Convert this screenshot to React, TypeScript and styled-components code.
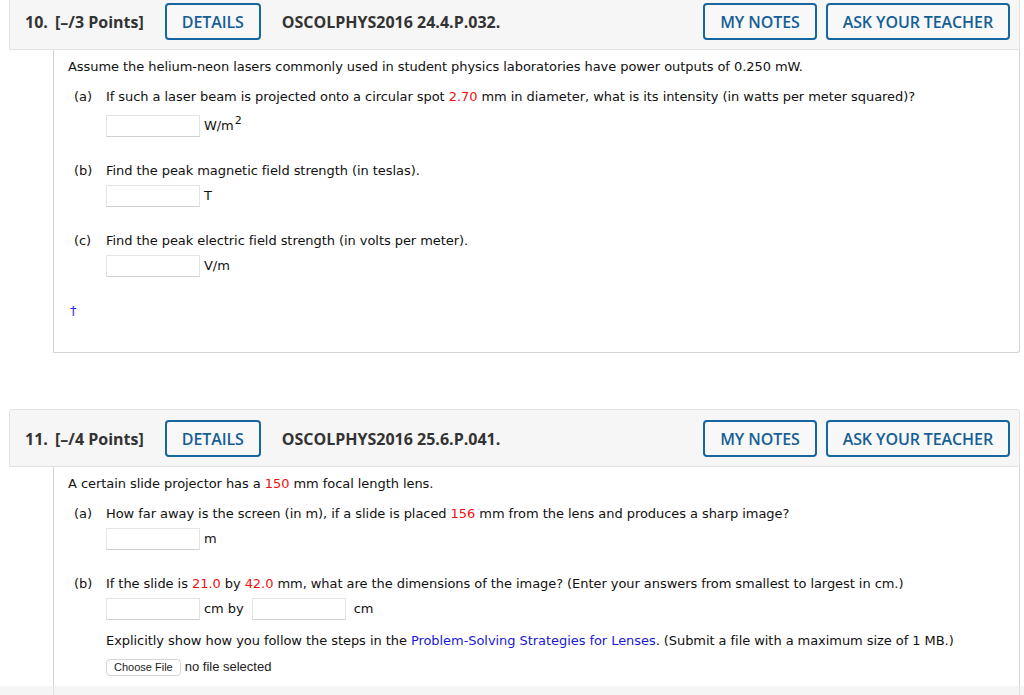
import React from 'react';
import styled, { createGlobalStyle } from 'styled-components';

const GlobalStyle = createGlobalStyle`
  html, body {
    margin: 0;
    padding: 0;
    background: #ffffff;
  }
  body {
    font-family: "DejaVu Sans", Verdana, sans-serif;
    overflow: hidden;
  }
`;

type Part = {
  label: string;
  question: React.ReactNode;
  answer: React.ReactNode;
  extra?: React.ReactNode;
  raised?: boolean;
};

type Question = {
  num: string;
  points: string;
  code: string;
  intro: React.ReactNode;
  parts: Part[];
  footnote?: boolean;
  gap?: boolean;
};

const getQuestions = (): Question[] => [
  {
    num: '10.',
    points: '[–/3 Points]',
    code: 'OSCOLPHYS2016 24.4.P.032.',
    intro: (
      <>Assume the helium-neon lasers commonly used in student physics laboratories have power outputs of 0.250 mW.</>
    ),
    parts: [
      {
        label: '(a)',
        question: (
          <>
            If such a laser beam is projected onto a circular spot <Given>2.70</Given> mm in diameter, what is its
            intensity (in watts per meter squared)?
          </>
        ),
        answer: (
          <>
            W/m<sup>2</sup>
          </>
        ),
        raised: true,
      },
      {
        label: '(b)',
        question: <>Find the peak magnetic field strength (in teslas).</>,
        answer: <>T</>,
      },
      {
        label: '(c)',
        question: <>Find the peak electric field strength (in volts per meter).</>,
        answer: <>V/m</>,
      },
    ],
    footnote: true,
  },
  {
    num: '11.',
    points: '[–/4 Points]',
    code: 'OSCOLPHYS2016 25.6.P.041.',
    intro: (
      <>
        A certain slide projector has a <Given>150</Given> mm focal length lens.
      </>
    ),
    parts: [
      {
        label: '(a)',
        question: (
          <>
            How far away is the screen (in m), if a slide is placed <Given>156</Given> mm from the lens and produces a
            sharp image?
          </>
        ),
        answer: <>m</>,
      },
      {
        label: '(b)',
        question: (
          <>
            If the slide is <Given>21.0</Given> by <Given>42.0</Given> mm, what are the dimensions of the image? (Enter
            your answers from smallest to largest in cm.)
          </>
        ),
        answer: (
          <>
            cm by <AnswerBox /> cm
          </>
        ),
        extra: (
          <>
            <Note>
              Explicitly show how you follow the steps in the <Link>Problem-Solving Strategies for Lenses</Link>.
              (Submit a file with a maximum size of 1 MB.)
            </Note>
            <FileRow>
              <FileButton>Choose File</FileButton>
              <FileName>no file selected</FileName>
            </FileRow>
          </>
        ),
      },
    ],
    gap: true,
  },
];

const App = () => {
  const questions = getQuestions();
  return (
    <>
      <GlobalStyle />
      <Page>
        {questions.map((q) => (
          <Card key={q.num} $gap={!!q.gap}>
            <Header>
              <Num>{q.num}</Num>
              <Points>{q.points}</Points>
              <OutlineButton>DETAILS</OutlineButton>
              <Code>{q.code}</Code>
              <HeaderActions>
                <OutlineButton>MY NOTES</OutlineButton>
                <OutlineButton>ASK YOUR TEACHER</OutlineButton>
              </HeaderActions>
            </Header>
            <Body $open={!q.footnote}>
              <Intro>{q.intro}</Intro>
              {q.parts.map((p) => (
                <PartBlock key={p.label}>
                  <PartLabel>{p.label}</PartLabel>
                  <PartMain>
                    <PartText>{p.question}</PartText>
                    <AnswerRow $raised={!!p.raised}>
                      <AnswerBox />
                      <Unit>{p.answer}</Unit>
                    </AnswerRow>
                    {p.extra}
                  </PartMain>
                </PartBlock>
              ))}
              {q.footnote && <Dagger>†</Dagger>}
            </Body>
          </Card>
        ))}
      </Page>
      <BottomShade />
    </>
  );
};

export default App;

const Page = styled.div`
  margin-top: -8px;
  padding: 0 4px 0 9px;
`;

const Card = styled.section<{ $gap: boolean }>`
  margin-top: ${(p) => (p.$gap ? '56px' : '0')};
`;

const Header = styled.div`
  display: flex;
  align-items: center;
  height: 58px;
  box-sizing: border-box;
  padding: 1px 9px 0 15px;
  background: #f6f6f6;
  border: 1px solid #e2e2e2;
  border-radius: 3px 3px 0 0;
  font-family: "Open Sans", "DejaVu Sans", sans-serif;
`;

const Num = styled.span`
  font-size: 16px;
  font-weight: 700;
  color: #333333;
  width: 30px;
`;

const Points = styled.span`
  font-size: 16px;
  font-weight: 700;
  color: #333333;
  margin-right: 21px;
`;

const Code = styled.span`
  font-size: 16px;
  font-weight: 700;
  color: #333333;
  margin-left: 21px;
`;

const HeaderActions = styled.div`
  display: flex;
  gap: 9px;
  margin-left: auto;
`;

const OutlineButton = styled.button`
  height: 37px;
  box-sizing: border-box;
  padding: 0 15px;
  border: 2px solid #16669f;
  border-radius: 4px;
  background: #f8f8f8;
  color: #155f97;
  font-family: "Open Sans", "DejaVu Sans", sans-serif;
  font-size: 16px;
  font-weight: 600;
  letter-spacing: -0.1px;
  cursor: pointer;
`;

const Body = styled.div<{ $open: boolean }>`
  margin-left: 44px;
  border: 1px solid #d4d4d4;
  border-top: none;
  border-radius: 0 0 3px 0;
  padding: 8px 14px ${(p) => (p.$open ? '40px' : '32px')};
  font-size: 13px;
  line-height: 18px;
  letter-spacing: -0.06px;
  color: #111111;
`;

const Intro = styled.div`
  margin-bottom: 12px;
`;

const PartBlock = styled.div`
  display: flex;
  padding-left: 6px;
  margin-bottom: 25px;
`;

const PartLabel = styled.div`
  width: 32px;
  flex-shrink: 0;
`;

const PartMain = styled.div`
  flex: 1;
`;

const PartText = styled.div``;

const AnswerRow = styled.div<{ $raised: boolean }>`
  display: flex;
  align-items: center;
  margin-top: ${(p) => (p.$raised ? '9px' : '5px')};
  height: 22px;
`;

const AnswerBox = styled.span`
  display: inline-block;
  width: 94px;
  height: 22px;
  box-sizing: border-box;
  border: 1px solid #e4e4e4;
  border-bottom-color: #d0d0d0;
  background: #ffffff;
  vertical-align: middle;
  margin: 0 4px 0 0;
`;

const Unit = styled.span`
  display: inline-flex;
  align-items: center;
  white-space: pre;

  ${AnswerBox} {
    margin: 0 4px;
  }

  sup {
    font-size: 11px;
    line-height: 0;
    position: relative;
    top: -5px;
    margin-left: 1px;
  }
`;

const Given = styled.span`
  color: #f01010;
`;

const Link = styled.span`
  color: #1a1ad0;
`;

const Note = styled.div`
  margin-top: 12px;
`;

const FileRow = styled.div`
  display: flex;
  align-items: center;
  margin-top: 8px;
  font-family: "Liberation Sans", Arial, sans-serif;
  letter-spacing: 0;
`;

const FileButton = styled.span`
  display: inline-flex;
  align-items: center;
  height: 17px;
  box-sizing: border-box;
  padding: 0 7px;
  border: 1px solid #d6d6d6;
  border-radius: 4px;
  background: #ffffff;
  font-size: 11px;
  color: #222222;
`;

const FileName = styled.span`
  margin-left: 4px;
  font-size: 13px;
  color: #222222;
`;

const Dagger = styled.div`
  color: #2a2aee;
  padding-left: 2px;
`;

const BottomShade = styled.div`
  position: fixed;
  left: 0;
  right: 0;
  bottom: 0;
  height: 9px;
  background: rgba(236, 236, 236, 0.55);
`;
